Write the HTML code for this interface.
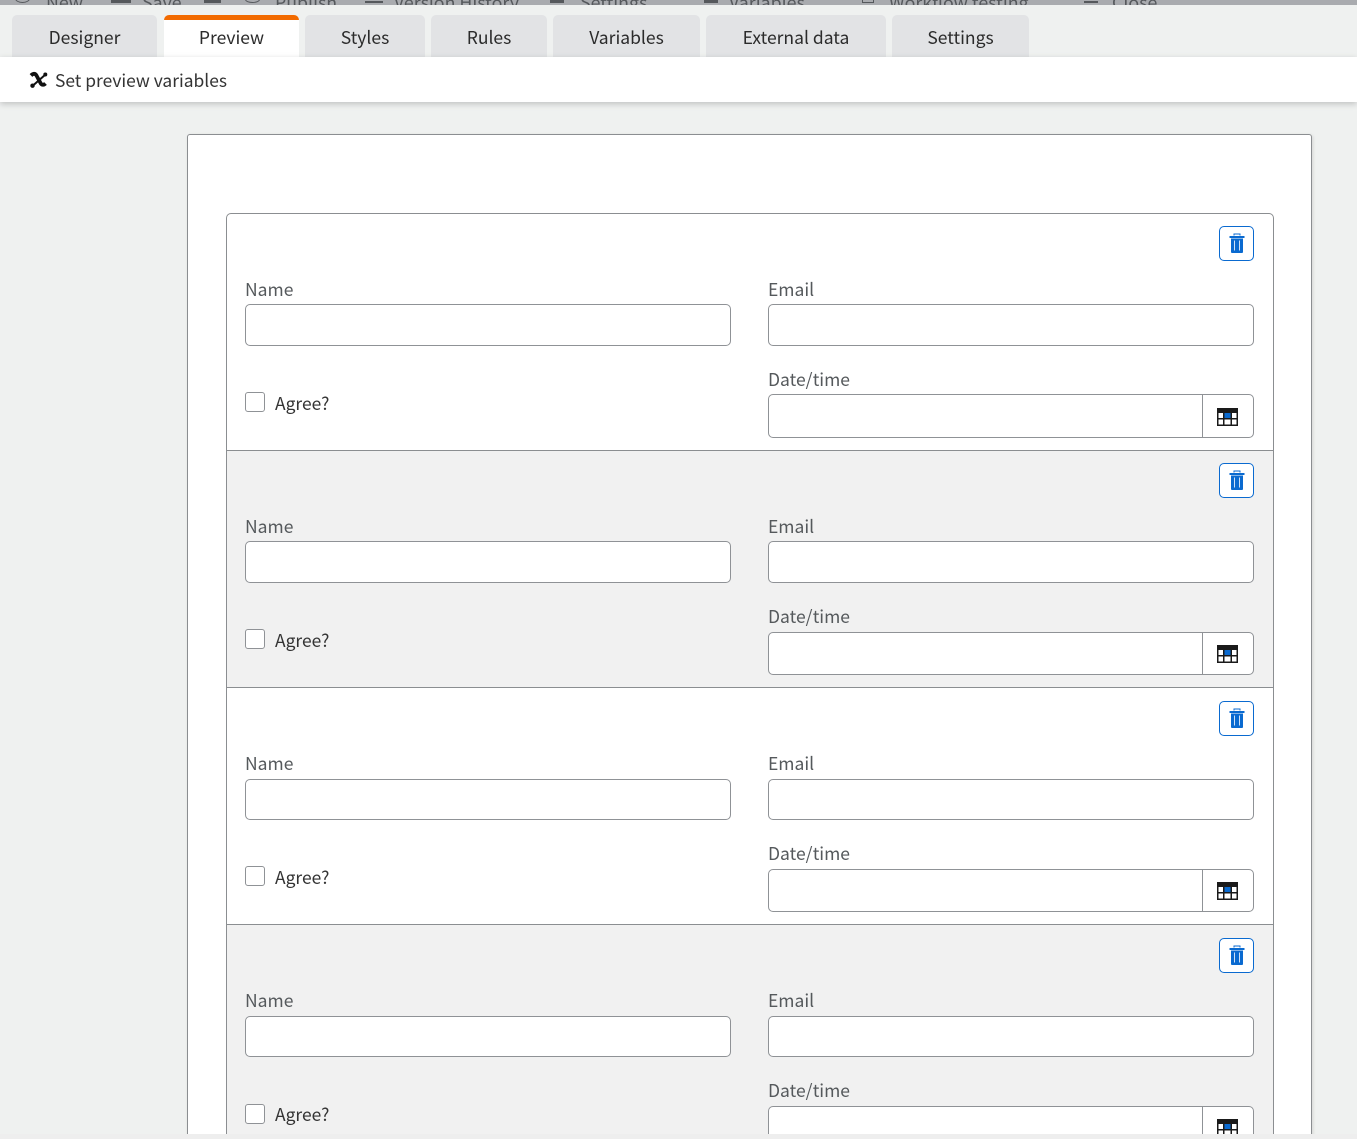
<!DOCTYPE html>
<html><head><meta charset="utf-8"><style>
html,body{margin:0;padding:0;width:1357px;height:1139px;overflow:hidden;background:#eff1f0}
body{position:relative;font-family:"Noto Sans CJK JP","Liberation Sans",sans-serif;color:#333}
div,span,svg{position:absolute;box-sizing:border-box}
.t{white-space:nowrap;line-height:24px;font-size:17.4px}
.tab{top:15px;height:42px;background:#e2e3e5;border-radius:5px 5px 0 0;text-align:center;font-size:17.5px;line-height:45px;color:#2b2b2b}
.top{position:absolute;top:-10px;font-size:17.8px;line-height:24px;color:#55585c;white-space:nowrap}
.row{left:227px;width:1046px;border-top:1px solid #8b8e91}
.lab{font-size:17.5px;line-height:24px;color:#55595c;white-space:nowrap}
.in{background:#fff;border:1px solid #8f9296;border-radius:5px}
.cb{width:20px;height:20px;background:#fff;border:1px solid #8f9296;border-radius:3px;left:245px}
.del{left:1219px;width:35px;height:35px;background:#fff;border:1px solid #0a6ad0;border-radius:5px}
</style></head><body>
<div style="left:0;top:0;width:1357px;height:5px;background:#a9abaf;overflow:hidden">
<span class="top" style="left:46px">New</span><span class="top" style="left:142px">Save</span><span class="top" style="left:275px">Publish</span><span class="top" style="left:394px">Version History</span><span class="top" style="left:580px">Settings</span><span class="top" style="left:729px">Variables</span><span class="top" style="left:889px">Workflow testing</span><span class="top" style="left:1112px">Close</span>
<div style="left:15px;top:-6px;width:15px;height:9px;border:1px solid #55585c;border-radius:50%"></div>
<div style="left:111px;top:0;width:20px;height:3px;background:#55585c"></div>
<div style="left:204px;top:0;width:17px;height:3px;background:#55585c"></div>
<div style="left:245px;top:-4px;width:15px;height:7px;border:1px solid #55585c;border-radius:50%"></div>
<div style="left:365px;top:1px;width:18px;height:2px;background:#55585c"></div>
<div style="left:550px;top:0;width:14px;height:3px;background:#55585c"></div>
<div style="left:704px;top:0;width:14px;height:3px;background:#55585c"></div>
<div style="left:862px;top:0;width:12px;height:3px;border:1px solid #55585c;border-top:0"></div>
<div style="left:1084px;top:1px;width:14px;height:2px;background:#55585c"></div>
</div>

<div class="tab" style="left:12px;width:145px">Designer</div>
<div class="tab" style="left:164px;width:135px;background:#fff;border-top:5px solid #f26a00;line-height:35px">Preview</div>
<div class="tab" style="left:305px;width:120px">Styles</div>
<div class="tab" style="left:431px;width:116px">Rules</div>
<div class="tab" style="left:553px;width:147px">Variables</div>
<div class="tab" style="left:706px;width:180px">External data</div>
<div class="tab" style="left:892px;width:137px">Settings</div>

<div style="left:0;top:57px;width:1357px;height:45px;background:#fff;box-shadow:0 2px 6px rgba(0,0,0,.2)"></div>
<svg style="left:29px;top:71px" width="19" height="18" viewBox="0 0 19 18"><path d="M2 4.500C4 2.500 6 2 7.500 4.500L11.500 12C12.500 14 14.500 14.500 16.500 12.500" fill="none" stroke="#111" stroke-width="3.800"/><path d="M16.500 3.500L4 14.500" fill="none" stroke="#111" stroke-width="2"/><circle cx="16.300" cy="3.500" r="2" fill="#111"/><circle cx="3.500" cy="14.700" r="2.200" fill="#111"/></svg>
<div class="t" style="left:55px;top:69px;color:#333">Set preview variables</div>

<div style="left:187px;top:134px;width:1125px;height:1010px;background:#fff;border:1px solid #8b8e91;border-radius:3px;box-shadow:1px 1px 3px rgba(0,0,0,.12)"></div>
<div style="left:226px;top:213px;width:1048px;height:930px;border:1px solid #8b8e91;border-radius:5px 5px 0 0"></div>

<div class="row" style="top:450px;height:237px;background:#f1f1f1"></div>
<div class="row" style="top:687px;height:237px"></div>
<div class="row" style="top:924px;height:215px;background:#f1f1f1"></div>

<!-- Row 1 -->
<div class="del" style="top:226px"><svg style="left:9px;top:6px" width="16" height="21" viewBox="0 0 16 21"><path d="M5 2.500V1h6v1.500" fill="none" stroke="#0a6ad0" stroke-width="1"/><path d="M.5 3h15v2H.5z" fill="#0a6ad0"/><path d="M2 5.500h12v13.500a1 1 0 0 1-1 1H3a1 1 0 0 1-1-1z" fill="#0a6ad0"/><path d="M5.500 7.500v10M10.500 7.500v10" stroke="#cfe2f8" stroke-width="1"/></svg></div>
<div class="lab" style="left:245px;top:278px">Name</div><div class="lab" style="left:768px;top:278px">Email</div>
<div class="in" style="left:245px;top:304px;width:486px;height:42px"></div><div class="in" style="left:768px;top:304px;width:486px;height:42px"></div>
<div class="cb" style="top:392px"></div><div class="t" style="left:275px;top:392px">Agree?</div>
<div class="lab" style="left:768px;top:368px">Date/time</div>
<div class="in" style="left:768px;top:394px;width:486px;height:44px"></div><div style="left:1202px;top:394px;width:1px;height:44px;background:#8f9296"></div>
<svg style="left:1217px;top:408px" width="21" height="18" viewBox="0 0 21 18"><path d="M0 0h21v18H0z" fill="#1a1a1a"/><path d="M1.500 5H6v5H1.500zM7.500 5h6v5h-6zM15 5h4.500v5H15zM1.500 11.500H6v5H1.500zM7.500 11.500h6v5h-6zM15 11.500h4.500v5H15z" fill="#fff"/><path d="M7.500 5h6v5h-6z" fill="#0a6ad0"/></svg>

<!-- Row 2 -->
<div class="del" style="top:463px"><svg style="left:9px;top:6px" width="16" height="21" viewBox="0 0 16 21"><path d="M5 2.500V1h6v1.500" fill="none" stroke="#0a6ad0" stroke-width="1"/><path d="M.5 3h15v2H.5z" fill="#0a6ad0"/><path d="M2 5.500h12v13.500a1 1 0 0 1-1 1H3a1 1 0 0 1-1-1z" fill="#0a6ad0"/><path d="M5.500 7.500v10M10.500 7.500v10" stroke="#cfe2f8" stroke-width="1"/></svg></div>
<div class="lab" style="left:245px;top:515px">Name</div><div class="lab" style="left:768px;top:515px">Email</div>
<div class="in" style="left:245px;top:541px;width:486px;height:42px"></div><div class="in" style="left:768px;top:541px;width:486px;height:42px"></div>
<div class="cb" style="top:629px"></div><div class="t" style="left:275px;top:629px">Agree?</div>
<div class="lab" style="left:768px;top:605px">Date/time</div>
<div class="in" style="left:768px;top:632px;width:486px;height:43px"></div><div style="left:1202px;top:632px;width:1px;height:43px;background:#8f9296"></div>
<svg style="left:1217px;top:645px" width="21" height="18" viewBox="0 0 21 18"><path d="M0 0h21v18H0z" fill="#1a1a1a"/><path d="M1.500 5H6v5H1.500zM7.500 5h6v5h-6zM15 5h4.500v5H15zM1.500 11.500H6v5H1.500zM7.500 11.500h6v5h-6zM15 11.500h4.500v5H15z" fill="#fff"/><path d="M7.500 5h6v5h-6z" fill="#0a6ad0"/></svg>

<!-- Row 3 -->
<div class="del" style="top:701px"><svg style="left:9px;top:6px" width="16" height="21" viewBox="0 0 16 21"><path d="M5 2.500V1h6v1.500" fill="none" stroke="#0a6ad0" stroke-width="1"/><path d="M.5 3h15v2H.5z" fill="#0a6ad0"/><path d="M2 5.500h12v13.500a1 1 0 0 1-1 1H3a1 1 0 0 1-1-1z" fill="#0a6ad0"/><path d="M5.500 7.500v10M10.500 7.500v10" stroke="#cfe2f8" stroke-width="1"/></svg></div>
<div class="lab" style="left:245px;top:752px">Name</div><div class="lab" style="left:768px;top:752px">Email</div>
<div class="in" style="left:245px;top:779px;width:486px;height:41px"></div><div class="in" style="left:768px;top:779px;width:486px;height:41px"></div>
<div class="cb" style="top:866px"></div><div class="t" style="left:275px;top:866px">Agree?</div>
<div class="lab" style="left:768px;top:842px">Date/time</div>
<div class="in" style="left:768px;top:869px;width:486px;height:43px"></div><div style="left:1202px;top:869px;width:1px;height:43px;background:#8f9296"></div>
<svg style="left:1217px;top:882px" width="21" height="18" viewBox="0 0 21 18"><path d="M0 0h21v18H0z" fill="#1a1a1a"/><path d="M1.500 5H6v5H1.500zM7.500 5h6v5h-6zM15 5h4.500v5H15zM1.500 11.500H6v5H1.500zM7.500 11.500h6v5h-6zM15 11.500h4.500v5H15z" fill="#fff"/><path d="M7.500 5h6v5h-6z" fill="#0a6ad0"/></svg>

<!-- Row 4 -->
<div class="del" style="top:938px"><svg style="left:9px;top:6px" width="16" height="21" viewBox="0 0 16 21"><path d="M5 2.500V1h6v1.500" fill="none" stroke="#0a6ad0" stroke-width="1"/><path d="M.5 3h15v2H.5z" fill="#0a6ad0"/><path d="M2 5.500h12v13.500a1 1 0 0 1-1 1H3a1 1 0 0 1-1-1z" fill="#0a6ad0"/><path d="M5.500 7.500v10M10.500 7.500v10" stroke="#cfe2f8" stroke-width="1"/></svg></div>
<div class="lab" style="left:245px;top:989px">Name</div><div class="lab" style="left:768px;top:989px">Email</div>
<div class="in" style="left:245px;top:1016px;width:486px;height:41px"></div><div class="in" style="left:768px;top:1016px;width:486px;height:41px"></div>
<div class="cb" style="top:1104px"></div><div class="t" style="left:275px;top:1103px">Agree?</div>
<div class="lab" style="left:768px;top:1079px">Date/time</div>
<div class="in" style="left:768px;top:1106px;width:486px;height:43px"></div><div style="left:1202px;top:1106px;width:1px;height:33px;background:#8f9296"></div>
<svg style="left:1217px;top:1119px" width="21" height="18" viewBox="0 0 21 18"><path d="M0 0h21v18H0z" fill="#1a1a1a"/><path d="M1.500 5H6v5H1.500zM7.500 5h6v5h-6zM15 5h4.500v5H15zM1.500 11.500H6v5H1.500zM7.500 11.500h6v5h-6zM15 11.500h4.500v5H15z" fill="#fff"/><path d="M7.500 5h6v5h-6z" fill="#0a6ad0"/></svg>

<div style="left:0;top:1134px;width:1357px;height:5px;background:#eeeeee"></div>
</body></html>
